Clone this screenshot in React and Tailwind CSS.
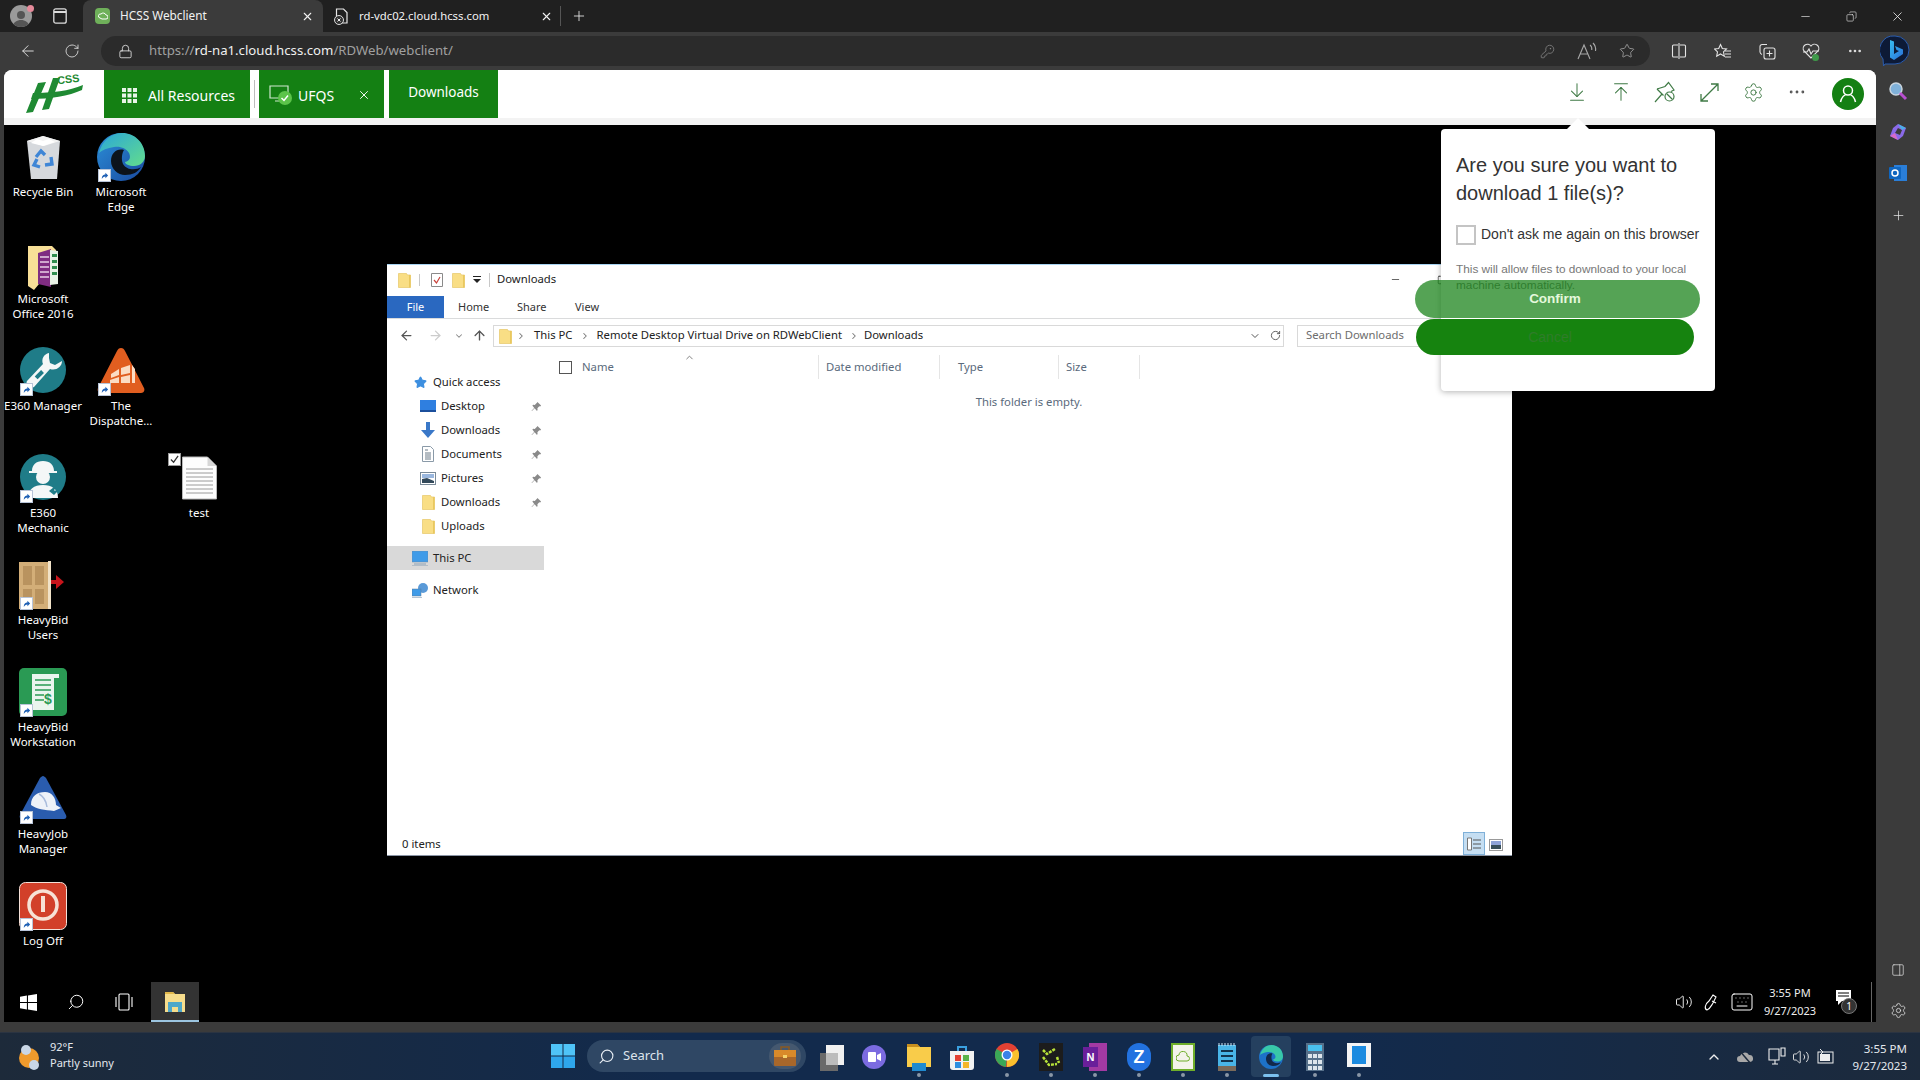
import {
  ArrowDownToLine, ArrowLeft, ArrowRight, ArrowUp, ArrowUpToLine, ChevronDown, ChevronRight, ChevronUp, Copy, Ellipsis, KeyRound,
  Keyboard, Lock, Minus, PanelRight, Plus, RotateCw, Search, Settings, Square, Star, Volume2, X,
} from 'lucide-react'

const winFont = "font-['Noto_Sans',sans-serif]"
const arial = "font-['Liberation_Sans',Arial,sans-serif]"

function Shortcut() {
  return (
    <span className="absolute left-[1px] bottom-[-1px] w-[13px] h-[13px] bg-white border border-[#b8c4d8] flex items-center justify-center">
      <svg width="9" height="9" viewBox="0 0 10 10"><path d="M2 9c0-4 2-5 4-5V2l3 3-3 3V6C4 6 3 7 2 9z" fill="#1d5fb4" /></svg>
    </span>
  )
}

function FolderIcon({ w = 13, h = 16 }) {
  return (
    <svg width={w} height={h} viewBox="0 0 13 16" className="shrink-0">
      <path d="M.5 1.5h8l1 1.5h3v12.5h-12z" fill="#f9de85" stroke="#e6c767" strokeWidth=".7" />
      <path d="M12.5 3v12.5h-1.5V3z" fill="#e9c85f" />
    </svg>
  )
}

const desktopIcons = [
  { label: ['Recycle Bin'], cell: 'col-start-1 row-start-1', art: (
    <svg width="48" height="48" viewBox="0 0 48 48">
      <path d="M8 8l16-5 17 5-3 38H12z" fill="#d6d9dd" />
      <path d="M8 8l16-5 17 5-16 5z" fill="#f2f2f2" />
      <path d="M12 10l6-4 6 2 6-2 6 3-12 4z" fill="#fff" />
      <g fill="none" stroke="#3f86d6" strokeWidth="3.4"><path d="M17 24l5-6 4 4" /><path d="M32 24l1 7-7 1" /><path d="M21 34l-6-2 3-6" /></g>
    </svg>
  ) },
  { label: ['Microsoft', 'Edge'], cell: 'col-start-2 row-start-1', shortcut: true, art: (
    <svg width="48" height="48" viewBox="0 0 48 48">
      <defs>
        <linearGradient id="edgeA" x1="0" y1="0" x2="1" y2="1"><stop offset="0" stopColor="#2b8fd8" /><stop offset="1" stopColor="#1a4aa0" /></linearGradient>
        <linearGradient id="edgeB" x1="0" y1="0" x2="1" y2="1"><stop offset="0" stopColor="#2aa6d8" /><stop offset="1" stopColor="#63dd8c" /></linearGradient>
      </defs>
      <circle cx="24" cy="24" r="24" fill="url(#edgeA)" />
      <path d="M2 20C5 8 14 0 25 0c13 0 23 10 23 23 0 6-5 10-11 10-5 0-9-2-9-4 5-1 6-5 4-9-3-5-9-7-15-6-7 1-12 3-15 6z" fill="url(#edgeB)" />
      <path d="M27 17c-7-2-13 3-13 11 0 8 7 14 14 14 8 0 13-3 16-8-4 3-14 4-18-3-2-5-1-11 1-14z" fill="#0a0a0a" opacity=".9" />
    </svg>
  ) },
  { label: ['Microsoft', 'Office 2016'], cell: 'col-start-1 row-start-2', art: (
    <svg width="48" height="48" viewBox="0 0 48 48" className="mt-[4px]">
      <path d="M9 2h24l4 4v34H20l-5 6-6-4z" fill="#f8df97" />
      <path d="M19 9l13-4v38l-13-3z" fill="#7f2c82" />
      <g stroke="#e9cfe6" strokeWidth="1.6"><path d="M21 13h9M21 18h9M21 23h9M21 28h9M21 33h9" /></g>
      <path d="M31 6l8 1v33l-8 1z" fill="#e8f2e6" />
      <g fill="#2f8d4e"><rect x="33" y="10" width="5" height="3" /><rect x="33" y="16" width="5" height="3" /><rect x="33" y="22" width="5" height="3" /><rect x="33" y="28" width="5" height="3" /></g>
    </svg>
  ) },
  { label: ['E360 Manager'], cell: 'col-start-1 row-start-3', shortcut: true, art: (
    <svg width="48" height="48" viewBox="0 0 48 48">
      <circle cx="24" cy="23" r="23" fill="#1f7c88" />
      <path d="M30 6c-5 1-8 6-6 11L8 34c-2 3 3 9 7 6l16-18c6 2 12-2 12-8l-7 4-5-2-1-5z" fill="#f4f7f7" />
      <rect x="16" y="26" width="9" height="4" fill="#1f7c88" transform="rotate(-45 20 28)" />
    </svg>
  ) },
  { label: ['The', 'Dispatche...'], cell: 'col-start-2 row-start-3', shortcut: true, art: (
    <svg width="48" height="48" viewBox="0 0 48 48">
      <path d="M24 1c2 0 3 1 4 3l19 37c1 2 0 5-3 5H4c-3 0-4-3-3-5L20 4c1-2 2-3 4-3z" fill="#e15e20" />
      <g fill="#fbdcc4"><path d="M14 27l8-5v6l-8 3z" /><path d="M24 21l9-3v8l-9 2z" /><path d="M13 33l9-3v6h-9z" /><path d="M24 30l9-2v8h-9z" /><path d="M35 18l3 4v14h-3z" /></g>
    </svg>
  ) },
  { label: ['E360', 'Mechanic'], cell: 'col-start-1 row-start-4', shortcut: true, art: (
    <svg width="48" height="48" viewBox="0 0 48 48">
      <circle cx="24" cy="23" r="23" fill="#1f7c88" />
      <path d="M13 17c0-6 4-10 11-10s11 4 11 10h3v2H10v-2z" fill="#f4f7f7" />
      <circle cx="24" cy="23" r="7" fill="#f4f7f7" />
      <path d="M9 44c0-9 6-13 15-13s15 4 15 13z" fill="#f4f7f7" />
      <path d="M30 37l5-4 2 1-2 2 1 1 2-2 1 2-4 4z" fill="#1f7c88" />
    </svg>
  ) },
  { label: ['test'], cell: 'col-start-3 row-start-4', art: (
    <div className="relative w-[48px] h-[48px]">
      <svg width="48" height="48" viewBox="0 0 48 48">
        <path d="M7.500 3h25l9 9v33h-34z" fill="#fdfdfd" stroke="#b9b9b9" />
        <path d="M32.500 3v9h9z" fill="#d7d7d7" />
        <g stroke="#9a9a9a"><path d="M11 15h27M11 19h27M11 23h27M11 27h27M11 31h27M11 35h27M11 39h27" /></g>
      </svg>
      <span className="absolute left-[-7px] top-[-1px] w-[13px] h-[13px] bg-white border border-[#9a9a9a] flex items-center justify-center">
        <svg width="9" height="9" viewBox="0 0 10 10"><path d="M1 5l3 3 5-7" fill="none" stroke="#333" strokeWidth="1.400" /></svg>
      </span>
    </div>
  ) },
  { label: ['HeavyBid', 'Users'], cell: 'col-start-1 row-start-5', shortcut: true, art: (
    <svg width="48" height="48" viewBox="0 0 48 48">
      <path d="M0 1h29v47H0z" fill="#d3ae78" />
      <path d="M29 0h3v48h-3z" fill="#f1e2c8" />
      <path d="M4 5h9v19H4zM16 5h9v19h-9zM4 28h9v15H4zM16 28h9v15h-9z" fill="#b9935f" />
      <path d="M32 19h5v-5l8 7-8 7v-5h-5z" fill="#c8141b" />
    </svg>
  ) },
  { label: ['HeavyBid', 'Workstation'], cell: 'col-start-1 row-start-6', shortcut: true, art: (
    <svg width="48" height="48" viewBox="0 0 48 48">
      <rect width="48" height="48" rx="5" fill="#2a9a54" />
      <path d="M13 6h27v4h-5v32H13z" fill="#eaf5ee" />
      <g stroke="#2a9a54" strokeWidth="1.600"><path d="M16 12h16M16 17h16M16 22h16M16 27h9M16 32h9" /></g>
      <text x="25" y="36" fontSize="14" fontWeight="700" fill="#2a9a54" fontFamily="Liberation Sans">$</text>
    </svg>
  ) },
  { label: ['HeavyJob', 'Manager'], cell: 'col-start-1 row-start-7', shortcut: true, art: (
    <svg width="48" height="48" viewBox="0 0 48 48">
      <path d="M24 1c1 0 2 1 3 2l20 37c1 2 0 4-2 4H3c-2 0-3-2-2-4L21 3c1-1 2-2 3-2z" fill="#2a5cae" />
      <path d="M12 30c0-9 6-13 14-13 7 0 11 6 11 13l5 3-7 3c-9-1-18-2-23-6z" fill="#eef2f8" />
      <path d="M20 19c4 2 7 6 8 13" fill="none" stroke="#a9bcdc" strokeWidth="1.500" />
    </svg>
  ) },
  { label: ['Log Off'], cell: 'col-start-1 row-start-8', shortcut: true, art: (
    <svg width="48" height="48" viewBox="0 0 48 48">
      <rect x=".5" y=".5" width="47" height="47" rx="6" fill="#d2402a" stroke="#f3e0d8" />
      <circle cx="24" cy="23" r="14" fill="none" stroke="#f7e2d6" strokeWidth="3.500" />
      <rect x="22" y="14" width="4" height="16" fill="#f7e2d6" />
    </svg>
  ) },
]

function DesktopIcon({ item }) {
  return (
    <div className={`${item.cell} flex flex-col items-center w-[78px]`}>
      <div className="relative w-[48px] h-[48px] flex justify-center">
        {item.art}
        {item.shortcut && <Shortcut />}
      </div>
      <div className={`mt-[3px] text-white text-[11.5px] leading-[15px] text-center whitespace-nowrap ${winFont}`}>
        {item.label.map((l) => <div key={l}>{l}</div>)}
      </div>
    </div>
  )
}

const Pin = () => (
  <svg width="11" height="11" viewBox="0 0 12 12" className="ml-auto shrink-0"><path d="M7 1l4 4-1 1-1-.3L7 8l.2 2-1 .6L4 8 1 11l-.4-.4L3.500 7.500 1.500 5l.8-1 1.800.3L6.500 2z" fill="#8a8a8a" /></svg>
)

function NavRow({ icon, label, pin, pl = 'pl-[33px]', active, gap = 'gap-[5px]' }) {
  return (
    <div className={`h-6 flex items-center ${pl} ${gap} pr-[2px] text-[11.3px] text-[#222] ${active ? 'bg-[#d9d9d9]' : ''}`}>
      <span className="w-[16px] flex justify-center shrink-0">{icon}</span>
      <span>{label}</span>
      {pin && <Pin />}
    </div>
  )
}

function ExplorerWindow() {
  return (
    <div className={`absolute left-[383px] top-[139px] w-[1125px] h-[592px] bg-white flex flex-col border-t border-[#a8d4f2] ${winFont}`}>
      {/* title bar */}
      <div className="h-[31px] flex items-center pl-[11px] pb-[2px] shrink-0">
        <FolderIcon />
        <span className="w-px h-[12px] bg-[#c8c8c8] ml-[8px]" />
        <svg width="12" height="16" viewBox="0 0 12 16" className="ml-[11px]"><path d="M.5 1.500h11v13H.5z" fill="#fff" stroke="#8a8a8a" /><path d="M3 8l2.500 3L9 5" fill="none" stroke="#c9423a" strokeWidth="1.200" /></svg>
        <span className="ml-[9px]"><FolderIcon /></span>
        <svg width="8" height="8" viewBox="0 0 8 8" className="ml-[8px]"><path d="M0 0h8v1H0zM0 3h8L4 7z" fill="#222" /></svg>
        <span className="w-px h-[14px] bg-[#c8c8c8] ml-[8px]" />
        <span className="ml-[7px] w-[60px] text-[11.3px] text-[#222]">Downloads</span>
        <Minus size={11} className="ml-[833px] text-[#222]" strokeWidth={1.5} />
        <Square size={10} className="ml-[36px] text-[#222]" strokeWidth={1.5} />
      </div>
      {/* ribbon tabs */}
      <div className="h-[23px] flex items-stretch text-[11px] border-b border-[#dadbdc] shrink-0">
        <div className="w-[57px] bg-[#2a68c0] text-white flex items-center justify-center">File</div>
        <div className="ml-[14px] w-[59px] flex items-center text-[#333]">Home</div>
        <div className="w-[58px] flex items-center text-[#333]">Share</div>
        <div className="flex items-center text-[#333]">View</div>
      </div>
      {/* address row */}
      <div className="h-[36px] flex items-center pb-[3px] shrink-0">
        <ArrowLeft size={15} className="ml-[12px] text-[#555]" strokeWidth={2} />
        <ArrowRight size={15} className="ml-[14px] text-[#ccc]" strokeWidth={2} />
        <ChevronDown size={10} className="ml-[11px] text-[#888]" strokeWidth={2.5} />
        <ArrowUp size={15} className="ml-[8px] text-[#555]" strokeWidth={2.2} />
        <div className="ml-[6px] w-[791px] h-[22px] border border-[#d9d9d9] flex items-center pl-[5px] text-[11.3px] text-[#222]">
          <FolderIcon />
          <ChevronRight size={10} className="ml-[4px] text-[#777]" strokeWidth={2.5} />
          <span className="ml-[8px]">This PC</span>
          <ChevronRight size={10} className="ml-[7px] text-[#777]" strokeWidth={2.5} />
          <span className="ml-[7px]">Remote Desktop Virtual Drive on RDWebClient</span>
          <ChevronRight size={10} className="ml-[7px] text-[#777]" strokeWidth={2.5} />
          <span className="ml-[5px]">Downloads</span>
          <ChevronDown size={12} className="ml-auto mr-[9px] text-[#555]" />
          <RotateCw size={11} className="mr-[2px] text-[#555]" />
        </div>
        <div className="ml-[13px] w-[198px] h-[22px] border border-[#d9d9d9] flex items-center pl-[8px] text-[11.3px] text-[#6d6d6d]">Search Downloads</div>
      </div>
      {/* panes */}
      <div className="flex-1 flex min-h-0">
        <div className="w-[157px] pt-[15px] shrink-0">
          <NavRow pl="pl-[25px]" gap="gap-[5px]" label="Quick access" icon={<Star size={13} className="text-[#3d8fe0] fill-[#3d8fe0]" />} />
          <NavRow pin label="Desktop" icon={<span className="w-[16px] h-[12px] bg-[#2f7fe0] border-b-2 border-[#1b4f9c]" />} />
          <NavRow pin label="Downloads" icon={<ArrowDownIcon />} />
          <NavRow pin label="Documents" icon={<DocIcon />} />
          <NavRow pin label="Pictures" icon={<PicIcon />} />
          <NavRow pin label="Downloads" icon={<FolderIcon />} />
          <NavRow label="Uploads" icon={<FolderIcon />} />
          <div className="h-[8px]" />
          <NavRow active pl="pl-[25px]" gap="gap-[5px]" label="This PC" icon={<PcIcon />} />
          <div className="h-[8px]" />
          <NavRow pl="pl-[25px]" gap="gap-[5px]" label="Network" icon={<NetIcon />} />
        </div>
        <div className="flex-1 relative">
          <div className="h-[24px] flex items-center text-[11.3px] text-[#5a6a7c]">
            <span className="ml-[15px] w-[13px] h-[13px] border border-[#555] shrink-0" />
            <span className="ml-[10px] w-[236px]">Name</span>
            <span className="w-px h-[24px] bg-[#e5e5e5]" />
            <span className="pl-[7px] w-[120px]">Date modified</span>
            <span className="w-px h-[24px] bg-[#e5e5e5]" />
            <span className="pl-[18px] w-[118px]">Type</span>
            <span className="w-px h-[24px] bg-[#e5e5e5]" />
            <span className="pl-[7px] w-[80px]">Size</span>
            <span className="w-px h-[24px] bg-[#e5e5e5]" />
          </div>
          <ChevronUp size={11} className="absolute left-[140px] top-[-3px] text-[#777]" />
          <div className="mt-[15px] pl-[2px] text-center text-[11.3px] text-[#5a6a7c]">This folder is empty.</div>
        </div>
      </div>
      {/* status bar */}
      <div className="h-[24px] flex items-center pl-[15px] pt-[2px] text-[11.3px] text-[#222] border-b border-[#8b95a5] shrink-0">
        0 items
        <div className="ml-auto self-end h-[23px] w-[22px] bg-[#c5def2] border border-[#7fb0d8] flex items-center justify-center mr-[4px]">
          <svg width="16" height="14" viewBox="0 0 16 14"><path d="M1.500 1h4v12h-4z" fill="#fff" stroke="#777" /><path d="M7 3h8M7 7h8M7 11h8" stroke="#555" /></svg>
        </div>
        <div className="mr-[9px]">
          <svg width="14" height="12" viewBox="0 0 14 12"><rect x=".5" y=".5" width="13" height="11" fill="#fff" stroke="#999" /><rect x="2" y="2" width="10" height="4" fill="#8fa4d8" /><rect x="2" y="6" width="10" height="4" fill="#39505a" /></svg>
        </div>
      </div>
    </div>
  )
}

const ArrowDownIcon = () => <svg width="16" height="16" viewBox="0 0 16 16"><path d="M6 0h4v8h5l-7 8-7-8h5z" fill="#3a78c8" /></svg>
const DocIcon = () => <svg width="12" height="16" viewBox="0 0 12 16"><path d="M.5.500h8l3 3v12H.5z" fill="#fff" stroke="#8a9aa8" /><path d="M3 4h3M3 7h6M3 9h6M3 11h6M3 13h6" stroke="#6a7a88" /></svg>
const PicIcon = () => <svg width="16" height="13" viewBox="0 0 16 13"><rect x=".5" y=".5" width="15" height="12" fill="#fff" stroke="#7a8a98" /><path d="M2 2h12v4H2z" fill="#9ab7de" /><path d="M2 7l5-1 7 3v2H2z" fill="#33495a" /></svg>
const PcIcon = () => <svg width="16" height="15" viewBox="0 0 16 15"><rect x="0" y="0" width="16" height="11" fill="#3f9be8" stroke="#6b8aa8" strokeWidth=".5" /><path d="M2 13h12M0 15h16" stroke="#8aa0b5" /></svg>
const NetIcon = () => <svg width="16" height="15" viewBox="0 0 16 15"><circle cx="11" cy="5" r="5" fill="#5a9ad8" /><rect x="0" y="6" width="9" height="7" fill="#3f9be8" stroke="#5a7a98" strokeWidth=".5" /><path d="M0 15h10" stroke="#6b8aa8" /></svg>

function Popup() {
  return (
    <div className={`absolute left-[1441px] top-[59px] w-[274px] h-[262px] bg-white rounded shadow-[0_1px_6px_rgba(0,0,0,0.3)] pt-[22px] ${arial}`}>
      <svg width="22" height="11" viewBox="0 0 22 11" className="absolute left-[126px] top-[-11px]"><path d="M0 11L11 0l11 11z" fill="#fff" /></svg>
      <div className="pl-[15px] text-[20px] leading-[28px] text-[#333]">
        Are you sure you want to<br />download 1 file(s)?
      </div>
      <div className="mt-[17px] pl-[15px] flex items-center gap-[5px] text-[14px] text-[#333] whitespace-nowrap">
        <span className="w-[20px] h-[20px] border-2 border-[#c4c4c4] shrink-0" />
        Don't ask me again on this browser
      </div>
      <div className="mt-[16px] pl-[15px] text-[11.8px] leading-[16px] text-[#777] whitespace-nowrap">
        This will allow files to download to your local<br />machine automatically.
      </div>
      <button className="block -mt-[13px] -ml-[26px] relative w-[285px] h-[38px] rounded-full bg-[#148013]/72 text-[#e4f8dc] text-[13.500px] font-semibold">
        <span className="-ml-[5px]">Confirm</span>
      </button>
      <button className="block mt-[1px] -ml-[25px] relative w-[278px] h-[36px] rounded-full bg-[#16830f] text-[#2f7d2a] text-[14px]">
        <span className="-ml-[10px]">Cancel</span>
      </button>
    </div>
  )
}

function BrowserTabs() {
  return (
    <div className={`h-8 bg-[#202020] flex items-stretch shrink-0 ${winFont}`}>
      <div className="w-[42px] flex items-center justify-center relative">
        <span className="w-[22px] h-[22px] rounded-full bg-[#9a9a9a] flex items-end justify-center overflow-hidden">
          <svg width="18" height="18" viewBox="0 0 18 18"><circle cx="9" cy="6" r="4" fill="#555" /><path d="M1 18c0-5 4-7 8-7s8 2 8 7z" fill="#555" /></svg>
        </span>
        <span className="absolute left-[27px] top-[5px] w-[7px] h-[7px] rounded-full bg-[#e58a9a]" />
      </div>
      <div className="w-[36px] flex items-center justify-center">
        <svg width="14" height="16" viewBox="0 0 14 16"><rect x=".8" y=".8" width="12.400" height="14.400" rx="2" fill="none" stroke="#ddd" strokeWidth="1.300" /><path d="M1 4h12" stroke="#ddd" strokeWidth="2" /></svg>
      </div>
      <div className="w-[5px]" />
      <div className="w-[240px] bg-[#3b3b3b] rounded-t-lg flex items-center pl-[12px] pr-[9px] text-[11.8px] text-[#f2f2f2]">
        <span className="w-[15px] h-[16px] rounded-sm bg-[#6fb05a] flex items-center justify-center">
          <svg width="10" height="10" viewBox="0 0 10 10"><path d="M2 7a2 2 0 0 1 1-4 3 3 0 0 1 5 1 2 2 0 0 1 0 4H4z" fill="none" stroke="#fff" /></svg>
        </span>
        <span className="ml-[10px]">HCSS Webclient</span>
        <X size={13} className="ml-auto" />
      </div>
      <div className="w-[238px] flex items-center pl-[11px] pr-[7px] text-[11.3px] text-[#f2f2f2] border-r border-[#555] my-[6px]">
        <svg width="15" height="17" viewBox="0 0 15 17"><path d="M2.500 1h7l3.500 3.500V15h-10.500z" fill="none" stroke="#e8e8e8" strokeWidth="1.200" /><circle cx="5" cy="12" r="4.500" fill="#333" stroke="#ddd" /><path d="M3.500 10.500l3 3m0-3l-3 3" stroke="#eee" /></svg>
        <span className="ml-[10px]">rd-vdc02.cloud.hcss.com</span>
        <X size={13} className="ml-auto" />
      </div>
      <div className="w-[36px] flex items-center justify-center"><Plus size={16} className="text-[#e8e8e8]" strokeWidth={1.3} /></div>
      <div className="ml-auto flex items-center text-[#eee]">
        <span className="w-[46px] flex justify-center"><Minus size={13} strokeWidth={1.2} /></span>
        <span className="w-[46px] flex justify-center"><Copy size={11} strokeWidth={1.3} className="scale-x-[-1]" /></span>
        <span className="w-[46px] flex justify-center"><X size={15} strokeWidth={1.3} /></span>
      </div>
    </div>
  )
}

function BrowserToolbar() {
  return (
    <div className={`h-[38px] bg-[#3b3b3b] flex items-center shrink-0 text-[#dcdcdc] ${winFont}`}>
      <span className="w-[56px] flex justify-center"><ArrowLeft size={18} strokeWidth={1.3} /></span>
      <span className="w-[32px] flex justify-center"><RotateCw size={16} strokeWidth={1.3} /></span>
      <div className="ml-[13px] w-[1549px] h-[30px] rounded-full bg-[#2b2b2b] flex items-center pl-[17px] pr-[3px]">
        <Lock size={15} strokeWidth={1.4} />
        <span className="ml-[16px] text-[13.2px] text-[#a0a0a0]">https://<span className="text-[#f0f0f0]">rd-na1.cloud.hcss.com</span>/RDWeb/webclient/</span>
        <span className="ml-auto w-[40px] flex justify-center text-[#8a8a8a]"><KeyRound size={15} strokeWidth={1.2} /></span>
        <span className="w-[40px] flex justify-center items-center">
          <svg width="20" height="18" viewBox="0 0 20 18" fill="none" stroke="#a8a8a8" strokeWidth="1.100"><path d="M1 17L7 3l6 14M3 12h8M13 3c1.500 1 2 3 1.800 5M16 1c2 2 3 5 2.500 8" /></svg>
        </span>
        <span className="w-[40px] flex justify-center text-[#a8a8a8]"><Star size={16} strokeWidth={1.2} /></span>
      </div>
      <div className="ml-[7px] flex items-center">
        <span className="w-[44px] flex justify-center">
          <svg width="16" height="16" viewBox="0 0 16 16" fill="none" stroke="#e4e4e4" strokeWidth="1.100"><path d="M7 2H2.500a1 1 0 0 0-1 1v10a1 1 0 0 0 1 1H7M9 2h4.500a1 1 0 0 1 1 1v10a1 1 0 0 1-1 1H9M8 0v16" /></svg>
        </span>
        <span className="w-[44px] flex justify-center">
          <svg width="18" height="17" viewBox="0 0 18 17" fill="none" stroke="#e4e4e4" strokeWidth="1.100"><path d="M6.500 1.500l1.800 4 4.200.4-3 3 .8 4.300-3.800-2.200-3.800 2.200.8-4.300-3-3 4.200-.4z" /><path d="M11 8h6M11 11h6M11 14h6" /></svg>
        </span>
        <span className="w-[44px] flex justify-center">
          <svg width="17" height="17" viewBox="0 0 17 17" fill="none" stroke="#e4e4e4" strokeWidth="1.100"><path d="M8 1.500H3a2 2 0 0 0-2 2V9a3 3 0 0 0 2 2.500" /><rect x="5" y="5" width="11" height="11" rx="2" /><path d="M10.500 7.500v6M7.500 10.500h6" /></svg>
        </span>
        <span className="w-[44px] flex justify-center relative">
          <svg width="18" height="17" viewBox="0 0 18 17" fill="none" stroke="#e4e4e4" strokeWidth="1.100"><path d="M9 15L2 8a4 4 0 0 1 7-5 4 4 0 0 1 7 5l-7 7z" /><path d="M1 9h4l2-3 2 5 2-3h6" /></svg>
          <span className="absolute left-[23px] top-[11px] w-[7px] h-[7px] rounded-full bg-[#3f9a4a]" />
        </span>
        <span className="w-[44px] flex justify-center"><Ellipsis size={16} /></span>
        <span className="ml-[3px] w-[30px] h-[32px] flex items-center justify-center">
          <svg width="30" height="32" viewBox="0 0 30 32">
            <defs><linearGradient id="bingB" x1="0" y1="0" x2="1" y2="1"><stop offset="0" stopColor="#37bdf0" /><stop offset="1" stopColor="#2a6fd8" /></linearGradient></defs>
            <path d="M15 1a14 14 0 0 1 0 28H5l-1.500 2L3 24A14 14 0 0 1 15 1z" fill="#0d1a36" stroke="#2a5cae" />
            <path d="M10 5l4 1.500V19l5-3-2.500-1-1.500-4 8 3.500v4.500L14 25l-4-2.500z" fill="url(#bingB)" />
          </svg>
        </span>
      </div>
    </div>
  )
}

function AppHeader() {
  const hdrIcon = 'w-[44px] flex justify-center pb-[4px] text-[#3f7a45]'
  return (
    <div className={`ml-[4px] h-[55px] shrink-0 bg-[#f3f3f3] rounded-t-lg overflow-hidden ${winFont}`}>
      <div className="h-[48px] bg-white flex items-stretch">
        <div className="w-[100px] relative">
          <svg width="100" height="48" viewBox="0 0 100 48" className="absolute left-0 top-0">
            <path d="M22 43l7-1 13-30-8 1zM38 40l7-1 11-31-7 0z" fill="#1f8a33" />
            <path d="M27 29l2-6c19 0 36-2 50-8l-1 5c-13 6-32 9-51 9z" fill="#1f8a33" />
          </svg>
          <span className="absolute left-[53px] top-[3px] text-[11px] leading-[13px] font-bold text-[#1f8a33] font-['Liberation_Sans',sans-serif] -rotate-[6deg]">CSS</span>
        </div>
        <div className="w-[146px] bg-[#148013] text-white text-[14px] flex items-center pl-[18px] pt-[2px]">
          <svg width="15" height="15" viewBox="0 0 15 15" fill="#e8f4e8"><rect width="4" height="4" /><rect x="5.500" width="4" height="4" /><rect x="11" width="4" height="4" /><rect y="5.500" width="4" height="4" /><rect x="5.500" y="5.500" width="4" height="4" /><rect x="11" y="5.500" width="4" height="4" /><rect y="11" width="4" height="4" /><rect x="5.500" y="11" width="4" height="4" /><rect x="11" y="11" width="4" height="4" /></svg>
          <span className="ml-[11px]">All Resources</span>
        </div>
        <span className="ml-[4px] w-px my-[10px] bg-[#bdbdbd]" />
        <div className="ml-[4px] w-[125px] bg-[#148013] text-white text-[14px] flex items-center pl-[10px] pt-[2px]">
          <span className="relative w-[24px] h-[20px]">
            <svg width="24" height="20" viewBox="0 0 24 20" fill="none"><path d="M1 1h18v12H1zM6 16h8" stroke="#cfe8cf" strokeWidth="1.200" /><circle cx="16" cy="13" r="7" fill="#5cc44a" /><path d="M12.500 13l2.500 2.500 4-5" stroke="#fff" strokeWidth="1.500" /></svg>
          </span>
          <span className="ml-[5px]">UFQS</span>
          <X size={14} className="ml-auto mr-[13px]" strokeWidth={1.6} />
        </div>
        <div className="ml-[5px] w-[109px] bg-[#148013] text-white text-[13.5px] flex items-center justify-center pb-[3px]">Downloads</div>
        <div className="ml-auto flex items-center pr-[12px]">
          <span className={hdrIcon}><ArrowDownToLine size={22} strokeWidth={1.1} /></span>
          <span className={hdrIcon}><ArrowUpToLine size={22} strokeWidth={1.1} /></span>
          <span className={hdrIcon}>
            <svg width="22" height="22" viewBox="0 0 22 22" fill="none" stroke="currentColor" strokeWidth="1.200"><path d="M3 8l8-2.500L14.500 1.500 20 9l-3 1.500" /><path d="M3 8l3 3 3.500 3.500" /><path d="M1 21l7-8" /><circle cx="15.500" cy="15.500" r="4.500" /><path d="M12.500 12.500l6 6" /></svg>
          </span>
          <span className={hdrIcon}>
            <svg width="21" height="21" viewBox="0 0 21 21" fill="none" stroke="currentColor" strokeWidth="1.300"><path d="M2 19L19 2M12 2h7v7M2 12v7h7" /></svg>
          </span>
          <span className={hdrIcon}><Settings size={21} strokeWidth={1.1} /></span>
          <span className={hdrIcon}><Ellipsis size={20} strokeWidth={1.4} className="text-[#555]" /></span>
          <span className="ml-[13px] w-[32px] h-[32px] rounded-full bg-[#148013] flex items-center justify-center">
            <svg width="20" height="20" viewBox="0 0 20 20" fill="none" stroke="#fff" strokeWidth="1.500"><circle cx="10" cy="6.500" r="4.500" /><path d="M2.500 18c1-5 4-7 5-7M17.500 18c-1-5-4-7-5-7" /></svg>
          </span>
        </div>
      </div>
    </div>
  )
}

function RemoteTaskbar() {
  return (
    <div className="h-[40px] bg-black flex items-stretch shrink-0 text-white relative">
      <span className="w-[48px] flex items-center justify-center">
        <svg width="17" height="17" viewBox="0 0 16 16" fill="#fff"><path d="M0 2.500l6.500-1v6H0zM7.500 1.300L16 0v7.500H7.500zM0 8.500h6.500v6L0 13.500zM7.500 8.500H16V16l-8.500-1.300z" /></svg>
      </span>
      <span className="w-[48px] flex items-center justify-center"><Search size={18} strokeWidth={1.3} className="scale-x-[-1]" /></span>
      <span className="w-[48px] flex items-center justify-center">
        <svg width="20" height="20" viewBox="0 0 20 20" fill="none" stroke="#fff" strokeWidth="1.100"><rect x="5" y="2" width="10" height="16" rx="1" /><path d="M2 5v10M18 5v10" /></svg>
      </span>
      <span className="ml-[3px] w-[48px] bg-[#333] border-b-2 border-[#9cc5e0] flex items-center justify-center">
        <svg width="22" height="22" viewBox="0 0 22 22"><path d="M1 2h8l2 2h10v18H1z" fill="#f7dd8c" /><path d="M1 2h8l2 2H1z" fill="#e2b84a" /><path d="M4 12h14v10h-4v-5H8v5H4z" fill="#4ea7c9" /></svg>
      </span>
      <div className="ml-auto flex items-center pr-[4px]">
        <Volume2 size={18} strokeWidth={1.2} />
        <svg width="16" height="20" viewBox="0 0 16 20" fill="none" stroke="#fff" strokeWidth="1.100" className="ml-[10px]"><path d="M4 18c-3-1-2-6 2-9l4-6 3 2-3 6c-2 3-3 6-6 7z" /><path d="M9 9l4 2" /></svg>
        <Keyboard size={24} strokeWidth={1} className="ml-[11px]" />
        <div className={`ml-[8px] w-[56px] text-center text-[11px] leading-[18px] text-[#eee] ${winFont}`}>3:55 PM<br />9/27/2023</div>
        <span className="ml-[18px] relative w-[20px] h-[24px]">
          <svg width="15" height="16" viewBox="0 0 15 16" fill="#fff"><path d="M0 0h15v11H6l-4 4v-4H0z" /><path d="M2 3h11M2 6h11" stroke="#000" /></svg>
          <span className={`absolute left-[5px] top-[8px] w-[16px] h-[16px] rounded-full bg-[#333] border border-[#777] text-[10px] leading-[14px] text-center ${winFont}`}>1</span>
        </span>
        <span className="ml-[15px] w-px h-[40px] bg-[#666]" />
      </div>
    </div>
  )
}

function WinTaskbar() {
  const dot = 'absolute bottom-[3px] left-1/2 -ml-[2px] w-[4px] h-[4px] rounded-full bg-[#8a96a6]'
  const apps = [
    <svg key="chrome" width="24" height="24" viewBox="0 0 24 24"><circle cx="12" cy="12" r="12" fill="#e34133" /><path d="M12 12L22.400 6A12 12 0 0 1 12 24z" fill="#fbc02d" /><path d="M12 12l-1 12A12 12 0 0 1 1.600 6z" fill="#3aa757" /><circle cx="12" cy="12" r="5.500" fill="#fff" /><circle cx="12" cy="12" r="4.200" fill="#3b82e8" /></svg>,
    <svg key="gc" width="24" height="28" viewBox="0 0 24 28"><rect width="24" height="28" fill="#1c1c1c" /><path d="M4 7l4 4 8-5M4 14l6 8 8-1M18 14l2 6" stroke="#b8e23a" strokeWidth="2.500" fill="none" strokeDasharray="3 1" /></svg>,
    <svg key="one" width="24" height="28" viewBox="0 0 24 28"><rect x="6" width="18" height="28" fill="#a33aa3" /><rect width="15" height="20" y="4" fill="#6a1f9a" /><text x="3.500" y="18" fontSize="11" fontWeight="700" fill="#fff" fontFamily="Liberation Sans">N</text></svg>,
    <span key="z" className="w-[24px] h-[28px] rounded-full bg-[#2272e0] flex items-center justify-center text-white font-bold text-[18px] font-['Liberation_Sans',sans-serif]">Z</span>,
    <span key="green" className="w-[24px] h-[28px] bg-[#f4f4ea] border-2 border-[#6fae2a] flex items-center justify-center">
      <svg width="14" height="12" viewBox="0 0 14 12" fill="none" stroke="#6fae2a"><path d="M3 10a3 3 0 0 1 0-6 4 4 0 0 1 8 1 2.500 2.500 0 0 1 0 5z" /></svg>
    </span>,
    <svg key="note" width="18" height="28" viewBox="0 0 18 28"><rect y="2" width="18" height="21" fill="#49b5e8" /><path d="M0 23h18v5H0z" fill="#7a6a5a" /><path d="M3 8h12M3 13h12M3 18h12" stroke="#12344f" strokeWidth="2" /><path d="M1 0v3M4 0v3M7 0v3M10 0v3M13 0v3M16 0v3" stroke="#cfe8f7" /></svg>,
    <svg key="edge" width="24" height="28" viewBox="0 0 48 48"><circle cx="24" cy="24" r="24" fill="#1d72c8" /><path d="M2 20C5 8 14 0 25 0c13 0 23 10 23 23 0 6-5 10-11 10-5 0-9-2-9-4 5-1 6-5 4-9-3-5-9-7-15-6-7 1-12 3-15 6z" fill="#38c8a8" /><path d="M27 17c-7-2-13 3-13 11 0 8 7 14 14 14 8 0 13-3 16-8-4 3-14 4-18-3-2-5-1-11 1-14z" fill="#12294a" /></svg>,
    <svg key="calc" width="18" height="28" viewBox="0 0 18 28"><rect width="18" height="28" fill="#56708a" /><rect x="2" y="2" width="14" height="6" fill="#49c0ee" /><g fill="#dde5ec"><rect x="2" y="11" width="4" height="4" /><rect x="7" y="11" width="4" height="4" /><rect x="12" y="11" width="4" height="4" /><rect x="2" y="17" width="4" height="4" /><rect x="7" y="17" width="4" height="4" /><rect x="12" y="17" width="4" height="4" /><rect x="2" y="23" width="4" height="4" /><rect x="7" y="23" width="4" height="4" /><rect x="12" y="23" width="4" height="4" /></g></svg>,
    <svg key="film" width="24" height="24" viewBox="0 0 24 24"><rect width="24" height="24" fill="#f4f4f4" /><rect x="5" y="3" width="14" height="18" fill="#1c8be0" /></svg>,
  ]
  return (
    <div className={`h-[48px] shrink-0 border-t border-[#2b3442] bg-[linear-gradient(90deg,#1d2a3a,#122a4c_35%,#122a4c_70%,#1c2a3c)] flex items-center relative text-white ${winFont}`}>
      <svg width="24" height="26" viewBox="0 0 24 26" className="ml-[18px]"><circle cx="11" cy="14" r="10" fill="#ef9a2c" /><circle cx="8" cy="6" r="5" fill="#c9d6e6" /><circle cx="16" cy="21" r="5" fill="#c9d6e6" /></svg>
      <div className="ml-[8px] -mt-[3px] text-[11px] leading-[16px] text-[#e4e8ee]">92°F<br />Partly sunny</div>
      {/* centre icons */}
      <svg width="24" height="24" viewBox="0 0 24 24" className="absolute left-[551px] top-[11px]"><g fill="#4fc3f7"><rect width="11.500" height="11.500" /><rect x="12.500" width="11.500" height="11.500" /><rect y="12.500" width="11.500" height="11.500" fill="#2ea6ec" /><rect x="12.500" y="12.500" width="11.500" height="11.500" fill="#2ea6ec" /></g></svg>
      <div className="absolute left-[587px] top-[7px] w-[219px] h-[32px] rounded-full bg-[#2f4764] flex items-center pl-[11px] pr-[5px]">
        <Search size={17} strokeWidth={1.6} className="scale-x-[-1] text-[#e8eef4]" />
        <span className="ml-[8px] text-[13px] text-[#dde4ec]">Search</span>
        <span className="ml-auto w-[32px] h-[26px] rounded-full bg-[#45586f] flex items-center justify-center">
          <svg width="22" height="20" viewBox="0 0 22 20"><path d="M7 4V1h8v3" fill="none" stroke="#8a5a22" strokeWidth="1.500" /><rect y="4" width="22" height="16" rx="1" fill="#a8672a" /><rect y="4" width="22" height="7" fill="#d88a2a" /><rect x="9" y="9" width="4" height="3" fill="#f4d26a" /></svg>
        </span>
      </div>
      <span className="absolute left-[820px] top-[11px]">
        <svg width="24" height="28" viewBox="0 0 24 28"><rect x="0" y="9" width="18" height="18" fill="#6a6a6a" /><rect x="6" y="1" width="18" height="20" fill="#f0f0f0" /><rect x="6" y="9" width="12" height="12" fill="#bcbcbc" /></svg>
      </span>
      <span className="absolute left-[862px] top-[11px]">
        <svg width="24" height="26" viewBox="0 0 24 26"><circle cx="12" cy="13" r="12" fill="#7b6be0" /><rect x="6" y="8" width="8" height="10" rx="1" fill="#fff" /><path d="M15 11l4-2v8l-4-2z" fill="#fff" /></svg>
      </span>
      <span className="absolute left-[906px] top-[10px]">
        <svg width="26" height="28" viewBox="0 0 26 28"><path d="M1 1h10l3 3h11v20H1z" fill="#f9cc4a" /><path d="M1 1h10l3 3H1z" fill="#c88f1e" /><rect x="6" y="20" width="14" height="8" fill="#1f8ad0" /></svg>
      </span>
      <span className={dot + ' !left-[919px]'} />
      <span className="absolute left-[950px] top-[11px]">
        <svg width="24" height="26" viewBox="0 0 24 26"><path d="M0 7h24v16a3 3 0 0 1-3 3H3a3 3 0 0 1-3-3z" fill="#f2f2f2" /><path d="M8 7V3h8v4" fill="none" stroke="#3aa0e0" strokeWidth="2" /><rect x="5" y="11" width="6" height="6" fill="#e34133" /><rect x="13" y="11" width="6" height="6" fill="#5ab34a" /><rect x="5" y="18" width="6" height="6" fill="#2f8fe0" /><rect x="13" y="18" width="6" height="6" fill="#f4b62a" /></svg>
      </span>
      <div className="absolute left-[1251px] top-[3px] w-[40px] h-[41px] rounded bg-[#25405f]" />
      <div className="absolute left-[985px] top-0 h-full flex">
        {apps.map((a, i) => (
          <span key={i} className="w-[44px] h-full relative flex items-start justify-center pt-[10px]">
            {a}
            {i === 6
              ? <span className="absolute bottom-[3px] left-1/2 -ml-[8px] w-[16px] h-[3px] rounded bg-[#7cc0ee]" />
              : <span className={dot} />}
          </span>
        ))}
      </div>
      {/* tray */}
      <div className="ml-auto flex items-center pr-[13px]">
        <ChevronUp size={16} className="text-[#eee]" />
        <svg width="18" height="18" viewBox="0 0 18 18" className="ml-[14px]"><path d="M4 14a3 3 0 0 1 0-6 5 5 0 0 1 9-1 3.500 3.500 0 0 1 1 7z" fill="#a8a8a8" /><path d="M3 2l12 14" stroke="#1c2a3c" strokeWidth="1.500" /></svg>
        <svg width="18" height="20" viewBox="0 0 18 20" fill="none" stroke="#eee" strokeWidth="1.100" className="ml-[14px]"><path d="M1 2h10v11H1zM4 17h6M7 13v4M13 1h4v8h-4z" /></svg>
        <Volume2 size={18} strokeWidth={1.2} className="ml-[6px] text-[#eee]" />
        <svg width="18" height="16" viewBox="0 0 18 16" className="ml-[6px]"><rect x="2" y="3" width="15" height="11" fill="none" stroke="#eee" /><rect x="4" y="5" width="10" height="7" fill="#eee" /><path d="M4 0l3 3-3 3" fill="none" stroke="#eee" /></svg>
        <div className="ml-[11px] w-[62px] text-right text-[11.5px] leading-[17px] text-[#e4e8ee]">3:55 PM<br />9/27/2023</div>
      </div>
    </div>
  )
}

export default function App() {
  return (
    <div className="w-[1920px] h-[1080px] flex flex-col overflow-hidden bg-[#3b3b3b]">
      <BrowserTabs />
      <BrowserToolbar />
      <div className="flex-1 flex min-h-0 relative">
        <div className="w-[1876px] flex flex-col">
          <AppHeader />
          {/* remote desktop */}
          <div className="ml-[4px] flex-1 min-h-0 flex flex-col bg-black">
            <div className="flex-1 min-h-0 relative">
              <div className="grid grid-cols-[78px_78px_78px] auto-rows-[107px] pt-[8px]">
                {desktopIcons.map((item) => <DesktopIcon key={item.label.join(' ')} item={item} />)}
              </div>
              <ExplorerWindow />
            </div>
            <RemoteTaskbar />
          </div>
          <div className="h-[10px] shrink-0" />
        </div>
        {/* edge sidebar */}
        <div className="w-[44px] flex flex-col items-center pb-[2px]">
          <span className="h-[41px] flex items-center justify-center">
            <svg width="20" height="20" viewBox="0 0 20 20"><circle cx="8" cy="8" r="6" fill="#7fb0d8" stroke="#c8d4de" strokeWidth="1.500" /><path d="M12 12l6 6" stroke="#b84fd0" strokeWidth="3" /></svg>
          </span>
          <span className="h-[41px] flex items-center justify-center">
            <svg width="18" height="18" viewBox="0 0 18 18"><path d="M9 1l8 4-3 8-5 4-8-4 3-8z" fill="#8a6ae8" /><path d="M9 5l4 2-2 5-5-2z" fill="#3b3b3b" /><path d="M1 13l5-3 3 7z" fill="#d86ac8" /><path d="M9 1l8 4-4 2z" fill="#4ab0e8" /></svg>
          </span>
          <span className="h-[41px] flex items-center justify-center">
            <svg width="18" height="18" viewBox="0 0 18 18"><rect x="5" y="1" width="13" height="16" fill="#2a7ed8" /><rect y="3" width="12" height="12" rx="1" fill="#0f66c0" /><circle cx="6" cy="9" r="3" fill="none" stroke="#fff" strokeWidth="1.500" /></svg>
          </span>
          <span className="h-[41px] pt-[4px] flex items-center justify-center"><Plus size={15} className="text-[#e4e4e4]" strokeWidth={1.2} /></span>
          <span className="mt-auto h-[40px] flex items-center justify-center"><PanelRight size={14} className="text-[#d8d8d8]" strokeWidth={1.3} /></span>
          <span className="h-[40px] flex items-center justify-center"><Settings size={17} className="text-[#d8d8d8]" strokeWidth={1.2} /></span>
        </div>
        <Popup />
      </div>
      <WinTaskbar />
    </div>
  )
}
